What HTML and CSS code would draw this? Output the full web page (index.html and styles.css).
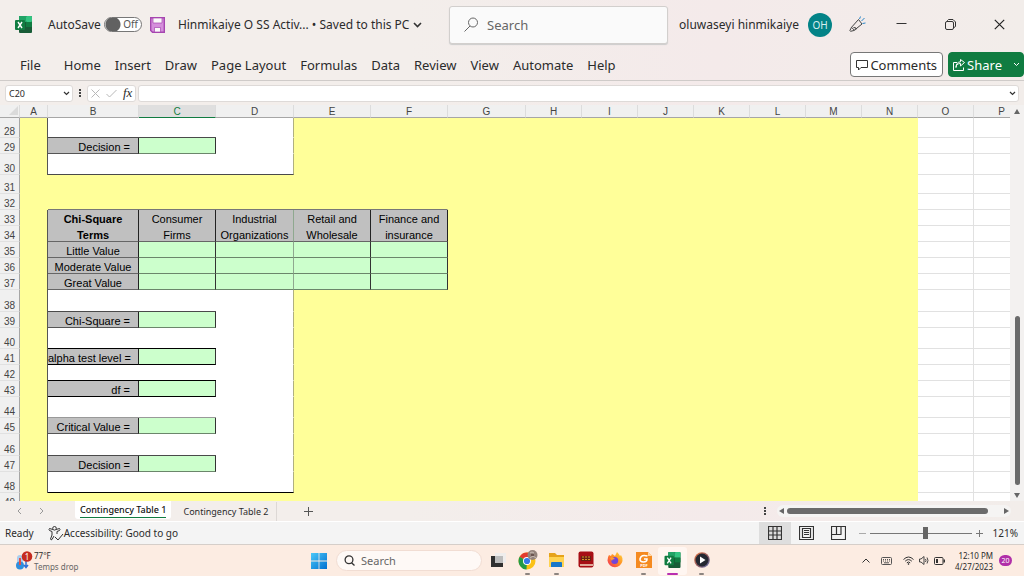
FILE: index.html
```html
<!DOCTYPE html>
<html lang="en">
<head>
  <meta charset="UTF-8">
  <meta name="viewport" content="width=device-width, initial-scale=1.0">
  <title>Hinmikaiye O SS Activ... - Excel</title>
  <link rel="stylesheet" href="styles.css">
</head>
<body>

  <header class="titlebar">
    <div class="title-left">
      <svg class="excel-logo" width="17" height="17" viewBox="0 0 17 17" aria-hidden="true">
        <rect x="4" y="0" width="13" height="17" rx="1" fill="#185c37"/>
        <rect x="4" y="0" width="7" height="6" fill="#21a366"/>
        <rect x="11" y="0" width="6" height="6" rx="1" fill="#33c481"/>
        <rect x="11" y="6" width="6" height="5" fill="#107c41"/>
        <rect x="0" y="4" width="10" height="10" rx="1" fill="#107c41"/>
        <path d="M3 6l4 6M7 6l-4 6" stroke="#fff" stroke-width="1.4"/>
      </svg>
      <label class="autosave">AutoSave
        <span class="switch"><input type="checkbox" role="switch" aria-label="AutoSave"><span class="switch-text">Off</span></span>
      </label>
      <button class="plain save" aria-label="Save">
        <svg width="15" height="16" viewBox="0 0 15 16"><path d="M.7.7h13.6v14.6H2.5L.7 13.5z" fill="#d58fdc" stroke="#a646b0" stroke-width="1.4"/><path d="M3 1h9v5H3zM4.500 10.500h6V15h-6z" fill="#fafafa" stroke="#a646b0" stroke-width=".7"/></svg>
      </button>
      <button class="plain doc-title">Hinmikaiye O SS Activ... • Saved to this PC
        <svg width="9" height="6" viewBox="0 0 9 6"><path d="M1 1l3.500 3.500L8 1" fill="none" stroke="#333" stroke-width="1.6"/></svg>
      </button>
    </div>
    <label class="title-search">
      <svg width="15" height="15" viewBox="0 0 15 15"><circle cx="9" cy="5.500" r="4.500" fill="none" stroke="#666"/><path d="M6 9L.5 14.500" stroke="#666"/></svg>
      <input type="search" placeholder="Search" aria-label="Search">
    </label>
    <div class="title-right">
      <span>oluwaseyi hinmikaiye</span>
      <button class="avatar">OH</button>
      <button class="plain pen" aria-label="Coming soon">
        <svg width="17" height="17" viewBox="0 0 17 17" fill="none"><path d="M9.500 3.500L13 8 5 14.500l-3.500.8-.6-.8 1.600-3.200zM4.500 11.500q3-.5 2.500 2M2.500 11.300l3 3" stroke="#444"/><path d="M10.500 3L11.500.5M12.500 5L15.500 2M13.500 7.500l3-.5" stroke="#2a86c8"/></svg>
      </button>
      <button class="plain win" aria-label="Minimize"><svg width="11" height="11" viewBox="0 0 11 11"><path d="M.5 4.500h10" stroke="#333"/></svg></button>
      <button class="plain win" aria-label="Restore"><svg width="11" height="11" viewBox="0 0 11 11" fill="none" stroke="#333"><rect x=".5" y="2.500" width="8" height="8" rx="1.500"/><path d="M2.500 2V1.500l1-1H8L10.500 3v4.500l-1.500 1"/></svg></button>
      <button class="plain win" aria-label="Close"><svg width="11" height="11" viewBox="0 0 11 11"><path d="M.8.8l9.400 9.400M10.200.8L.8 10.200" stroke="#222" stroke-width="1.200"/></svg></button>
    </div>
  </header>

  <nav class="ribbon">
    <button class="plain file-tab">File</button>
    <button class="plain">Home</button>
    <button class="plain">Insert</button>
    <button class="plain">Draw</button>
    <button class="plain">Page Layout</button>
    <button class="plain">Formulas</button>
    <button class="plain">Data</button>
    <button class="plain">Review</button>
    <button class="plain">View</button>
    <button class="plain">Automate</button>
    <button class="plain">Help</button>
    <div class="ribbon-actions">
      <button class="comments">
        <svg width="12" height="12" viewBox="0 0 12 12"><path d="M.5 1.500h11v7H5L2.500 11V8.500h-2z" fill="none" stroke="#333"/></svg>Comments
      </button>
      <button class="share">
        <svg width="12" height="12" viewBox="0 0 12 12" fill="none" stroke="#fff"><path d="M4 3.500H.5v8h10V8.500"/><path d="M3 8.500C3 6 4.500 4.500 7.500 4.500V7l4-3.500-4-3v2.300C4.500 3 3 5 3 8.500z"/></svg>Share
        <svg class="share-caret" width="7" height="5" viewBox="0 0 7 5"><path d="M1 1l2.500 2.500L6 1" fill="none" stroke="#fff"/></svg>
      </button>
    </div>
  </nav>

  <div class="formula-bar">
    <div class="name-box">
      <input type="text" value="C20" aria-label="Name box">
      <button class="plain" aria-label="Named ranges"><svg width="7" height="5" viewBox="0 0 7 5"><path d="M1 1l2.500 2.500L6 1" fill="none" stroke="#333" stroke-width="1.200"/></svg></button>
    </div>
    <svg class="dots" width="2" height="8" viewBox="0 0 2 8" fill="#444"><path d="M0 0h2v2H0zM0 3h2v2H0zM0 6h2v2H0z"/></svg>
    <div class="fx-box">
      <button class="plain" aria-label="Cancel"><svg width="9" height="9" viewBox="0 0 9 9"><path d="M.5.5l8 8M8.500.5l-8 8" stroke="#b8b8b8"/></svg></button>
      <button class="plain" aria-label="Enter"><svg width="11" height="9" viewBox="0 0 11 9"><path d="M.5 5l3 3L10.500 1" fill="none" stroke="#b8b8b8"/></svg></button>
      <button class="plain fx">fx</button>
    </div>
    <div class="formula-input">
      <input type="text" aria-label="Formula">
      <button class="plain" aria-label="Expand formula bar"><svg width="7" height="5" viewBox="0 0 7 5"><path d="M1 1l2.500 2.500L6 1" fill="none" stroke="#333" stroke-width="1.200"/></svg></button>
    </div>
  </div>

  <main class="sheet">
    <div class="grid-wrap">
      <table class="grid">
        <colgroup>
          <col class="c-head"><col class="c-a"><col class="c-b"><col class="c-m"><col class="c-w"><col class="c-m"><col class="c-m"><col class="c-w">
          <col class="c-n" span="9">
        </colgroup>
        <thead>
          <tr>
            <th class="corner"><svg width="9" height="9" viewBox="0 0 9 9"><path d="M9 0v9H0z" fill="#dadada"/></svg></th>
            <th>A</th><th>B</th><th class="selected">C</th><th>D</th><th>E</th><th>F</th><th>G</th><th>H</th><th>I</th><th>J</th><th>K</th><th>L</th><th>M</th><th>N</th><th>O</th><th>P</th>
          </tr>
        </thead>
        <tbody>
          <tr class="h20"><th>28</th><td class="y edge"></td><td class="w bb"></td><td class="w bb"></td><td class="w end"></td><td class="y" colspan="10"></td><td></td><td></td></tr>
          <tr><th>29</th><td class="y edge"></td><td class="label">Decision =</td><td class="g"></td><td class="w end"></td><td class="y" colspan="10"></td><td></td><td></td></tr>
          <tr class="h21"><th>30</th><td class="y edge"></td><td class="w bb"></td><td class="w bb"></td><td class="w end bb"></td><td class="y" colspan="10"></td><td></td><td></td></tr>
          <tr class="h19"><th>31</th><td class="y" colspan="14"></td><td></td><td></td></tr>
          <tr><th>32</th><td class="y"></td><td class="y top-line" colspan="5"></td><td class="y" colspan="8"></td><td></td><td></td></tr>
          <tr><th>33</th><td class="y edge"></td><td class="head bold">Chi-Square</td><td class="head">Consumer</td><td class="head soft">Industrial</td><td class="head">Retail and</td><td class="head">Finance and</td><td class="y" colspan="8"></td><td></td><td></td></tr>
          <tr><th>34</th><td class="y edge"></td><td class="head bold bb">Terms</td><td class="head bb">Firms</td><td class="head soft bb">Organizations</td><td class="head bb">Wholesale</td><td class="head bb">insurance</td><td class="y" colspan="8"></td><td></td><td></td></tr>
          <tr><th>35</th><td class="y edge"></td><td class="head bb">Little Value</td><td class="g"></td><td class="g soft"></td><td class="g"></td><td class="g"></td><td class="y" colspan="8"></td><td></td><td></td></tr>
          <tr><th>36</th><td class="y edge"></td><td class="head bb">Moderate Value</td><td class="g"></td><td class="g soft"></td><td class="g"></td><td class="g"></td><td class="y" colspan="8"></td><td></td><td></td></tr>
          <tr><th>37</th><td class="y edge"></td><td class="head bb">Great Value</td><td class="g"></td><td class="g soft"></td><td class="g"></td><td class="g"></td><td class="y" colspan="8"></td><td></td><td></td></tr>
          <tr class="h22"><th>38</th><td class="y edge"></td><td class="w bb"></td><td class="w bb"></td><td class="w end"></td><td class="y" colspan="10"></td><td></td><td></td></tr>
          <tr><th>39</th><td class="y edge"></td><td class="label">Chi-Square =</td><td class="g"></td><td class="w end"></td><td class="y" colspan="10"></td><td></td><td></td></tr>
          <tr class="h21"><th>40</th><td class="y edge"></td><td class="w bb dark"></td><td class="w bb dark"></td><td class="w end"></td><td class="y" colspan="10"></td><td></td><td></td></tr>
          <tr><th>41</th><td class="y edge"></td><td class="label dark">alpha test level =</td><td class="g dark"></td><td class="w end"></td><td class="y" colspan="10"></td><td></td><td></td></tr>
          <tr><th>42</th><td class="y edge"></td><td class="w bb dark"></td><td class="w bb dark"></td><td class="w end"></td><td class="y" colspan="10"></td><td></td><td></td></tr>
          <tr><th>43</th><td class="y edge"></td><td class="label dark">df =</td><td class="g dark"></td><td class="w end"></td><td class="y" colspan="10"></td><td></td><td></td></tr>
          <tr class="h21"><th>44</th><td class="y edge"></td><td class="w bb light"></td><td class="w bb light"></td><td class="w end"></td><td class="y" colspan="10"></td><td></td><td></td></tr>
          <tr><th>45</th><td class="y edge"></td><td class="label">Critical Value =</td><td class="g"></td><td class="w end"></td><td class="y" colspan="10"></td><td></td><td></td></tr>
          <tr class="h22"><th>46</th><td class="y edge"></td><td class="w bb"></td><td class="w bb"></td><td class="w end"></td><td class="y" colspan="10"></td><td></td><td></td></tr>
          <tr><th>47</th><td class="y edge"></td><td class="label">Decision =</td><td class="g"></td><td class="w end"></td><td class="y" colspan="10"></td><td></td><td></td></tr>
          <tr class="h21"><th>48</th><td class="y edge"></td><td class="w bb dark"></td><td class="w bb dark"></td><td class="w end bb dark"></td><td class="y" colspan="10"></td><td></td><td></td></tr>
          <tr><th>49</th><td class="y" colspan="14"></td><td></td><td></td></tr>
        </tbody>
      </table>
    </div>
    <div class="vscroll">
      <button class="plain" aria-label="Scroll up"><svg width="6" height="5" viewBox="0 0 6 5"><path d="M3 0l3 5H0z" fill="#666"/></svg></button>
      <div class="vtrack"><div class="vthumb"></div></div>
      <button class="plain" aria-label="Scroll down"><svg width="6" height="5" viewBox="0 0 6 5"><path d="M3 5l3-5H0z" fill="#666"/></svg></button>
    </div>
  </main>

  <div class="sheet-tabs">
    <button class="plain nav-arrow" aria-label="Previous sheet"><svg width="5" height="8" viewBox="0 0 5 8"><path d="M4 1L1 4l3 3" fill="none" stroke="#999"/></svg></button>
    <button class="plain nav-arrow" aria-label="Next sheet"><svg width="5" height="8" viewBox="0 0 5 8"><path d="M1 1l3 3-3 3" fill="none" stroke="#999"/></svg></button>
    <button class="plain tab active"><span>Contingency Table 1</span></button>
    <button class="plain tab">Contingency Table 2</button>
    <button class="plain add" aria-label="New sheet"><svg width="9" height="9" viewBox="0 0 9 9"><path d="M4.500 0v9M0 4.500h9" stroke="#555"/></svg></button>
    <div class="hscroll">
      <svg width="2" height="8" viewBox="0 0 2 8" fill="#444"><path d="M0 0h2v2H0zM0 3h2v2H0zM0 6h2v2H0z"/></svg>
      <div class="htrack">
        <button class="plain" aria-label="Scroll left"><svg width="5" height="6" viewBox="0 0 5 6"><path d="M0 3l5-3v6z" fill="#666"/></svg></button>
        <div class="hthumb"></div>
        <button class="plain" aria-label="Scroll right"><svg width="5" height="6" viewBox="0 0 5 6"><path d="M5 3L0 0v6z" fill="#666"/></svg></button>
      </div>
    </div>
  </div>

  <div class="statusbar">
    <span>Ready</span>
    <button class="plain access">
      <svg width="16" height="15" viewBox="0 0 16 15" fill="none" stroke="#333"><circle cx="6.500" cy="2.300" r="1.800"/><path d="M5 3.500L1.500 2.500Q.5 3.500 1.500 4.500L4 5.500V9l-1.500 4q.5 1.500 1.500.5L6 10M8 3.500l3.500-1q1 1 0 2L9 5.500V8M7 11l3 3 5-6"/></svg>Accessibility: Good to go
    </button>
    <div class="views">
      <button class="plain view current" aria-label="Normal view"><svg width="14" height="14" viewBox="0 0 14 14"><path d="M.5.5h13v13H.5zM.5 5h13M.5 9h13M5 .5v13M9 .5v13" fill="none" stroke="#333" stroke-width="1.200"/></svg></button>
      <button class="plain view" aria-label="Page layout view"><svg width="15" height="14" viewBox="0 0 15 14"><path d="M.5.5h14v13H.5zM3.500 2.500h8v9h-8zM5 4.500h5M5 6.500h5M5 8.500h5" fill="none" stroke="#333" stroke-width="1.200"/></svg></button>
      <button class="plain view" aria-label="Page break view"><svg width="15" height="14" viewBox="0 0 15 14"><path d="M.5.5h14v13H.5zM5.500.5V8M10 .5v7.500M.5 8.500h10" fill="none" stroke="#333" stroke-width="1.200"/></svg></button>
    </div>
    <div class="zoom">
      <button class="plain" aria-label="Zoom out"><svg width="7" height="7" viewBox="0 0 7 7"><path d="M0 3.500h7" stroke="#aaa"/></svg></button>
      <input type="range" min="10" max="210" value="121" aria-label="Zoom">
      <button class="plain" aria-label="Zoom in"><svg width="7" height="7" viewBox="0 0 7 7"><path d="M0 3.500h7M3.500 0v7" stroke="#777"/></svg></button>
      <span class="percent">121%</span>
    </div>
  </div>

  <footer class="taskbar">
    <button class="plain weather">
      <svg width="18" height="20" viewBox="0 0 18 20">
        <rect x="2" y="4" width="6" height="11" rx="3" fill="#a9cdee"/><circle cx="5" cy="14.500" r="4" fill="#2f8fdd"/><path d="M5 7v7" stroke="#e2504a" stroke-width="2"/>
        <path d="M11 9v7M9 14l2 2.500 2-2.500" fill="none" stroke="#2d6fd8" stroke-width="1.500"/>
        <circle cx="12" cy="5.500" r="5.300" fill="#c52b20"/><text x="12" y="8.500" text-anchor="middle" class="badge-text">1</text>
      </svg>
      <span class="two-line"><span>77°F</span><span class="muted">Temps drop</span></span>
    </button>
    <div class="apps">
      <button class="plain start" aria-label="Start"><svg width="16" height="16" viewBox="0 0 16 16"><defs><linearGradient id="win" x2="1" y2="1"><stop stop-color="#4cc8f8"/><stop offset="1" stop-color="#0070d0"/></linearGradient></defs><path d="M0 0h7.600v7.600H0zM8.400 0H16v7.600H8.400zM0 8.400h7.600V16H0zM8.400 8.400H16V16H8.400z" fill="url(#win)"/></svg></button>
      <label class="task-search">
        <svg width="11" height="11" viewBox="0 0 11 11" fill="none" stroke="#333" stroke-width="1.300"><circle cx="5" cy="4.800" r="3.900"/><path d="M7.500 7.700l3 2.800"/></svg>
        <input type="search" placeholder="Search" aria-label="Search the taskbar">
      </label>
      <button class="plain app" aria-label="Task view"><svg width="17" height="16" viewBox="0 0 17 16"><path d="M1 4h12v11H1z" fill="#2f2f2f"/><path d="M5 1h11v10H5z" fill="#ededed" opacity=".9"/><path d="M5 4h8v7H5z" fill="#bcbcbc"/></svg></button>
      <button class="plain app open" aria-label="Chrome">
        <svg width="20" height="20" viewBox="0 0 20 20"><circle cx="9" cy="11" r="8.500" fill="#fbc116"/><path d="M9 11L1.600 6.800A8.500 8.500 0 0 1 16.400 6.800z" fill="#e33b2e"/><path d="M9 11L1.600 6.800A8.500 8.500 0 0 0 8.500 19.500z" fill="#229a48"/><circle cx="9" cy="11" r="4" fill="#fff"/><circle cx="9" cy="11" r="3.100" fill="#3679e8"/><circle cx="14.500" cy="5" r="5" fill="#94847b"/><path d="M12 3q2-2 4 0M12 8l3-2 3 2" fill="none" stroke="#c9bdb5"/><path d="M13 5h3" stroke="#5d4640" stroke-width="1.500"/></svg>
      </button>
      <button class="plain app open" aria-label="File Explorer"><svg width="17" height="16" viewBox="0 0 17 16"><path d="M1 1h6l2 2h7v11H1z" fill="#e6a31b"/><path d="M1 5h15v10H1z" fill="#ffd351"/><path d="M3 11q0-1 1-1h9q1 0 1 1v4H3z" fill="#1876c9"/></svg></button>
      <button class="plain app" aria-label="Dictionary"><svg width="16" height="17" viewBox="0 0 16 17"><rect x=".5" y=".5" width="15" height="16" rx="2" fill="#a70e14"/><path d="M3 5h10v5H3z" fill="#6a2011"/><path d="M4 6h2M7 6h2M10 6h2M4 8.500h2M7 8.500h2M10 8.500h2" stroke="#d99328"/><path d="M2 14h13" stroke="#f2dbc3" stroke-width="1.500"/></svg></button>
      <button class="plain app" aria-label="Firefox"><svg width="16" height="16" viewBox="0 0 16 16"><defs><linearGradient id="fox" x1="1" x2="0" y2="1"><stop stop-color="#ffdc3c"/><stop offset=".5" stop-color="#ff8a24"/><stop offset="1" stop-color="#f3265f"/></linearGradient></defs><path d="M2 3l2 1 1-2q2 1 3 2Q9 2 10 0q2 2 3 4l1-1q2 3 1.500 6A7.600 7.600 0 0 1 .5 8.500Q.5 5 2 3z" fill="url(#fox)"/><circle cx="7.700" cy="8.500" r="3.500" fill="#7345d8"/><path d="M3 6q3-2 5 1-3 0-3 2z" fill="#ff9a30"/></svg></button>
      <button class="plain app open" aria-label="PDF editor"><svg width="16" height="16" viewBox="0 0 16 16"><path d="M0 0h12l4 4v12H0z" fill="#f58a20"/><path d="M12 0v4h4z" fill="#ffd9a8"/><path d="M11.500 4Q5 2 4 7q0 3 3.500 3Q11 10 11 7H8" fill="none" stroke="#fff" stroke-width="1.600"/><text x="8" y="15" text-anchor="middle" class="pdf-text">PDF</text></svg></button>
      <button class="plain app running" aria-label="Excel"><svg width="17" height="16" viewBox="0 0 17 17"><rect x="4" width="13" height="17" rx="1" fill="#185c37"/><path d="M4 0h7v6H4z" fill="#21a366"/><rect x="11" width="6" height="6" rx="1" fill="#33c481"/><path d="M11 6h6v5h-6z" fill="#107c41"/><rect y="4" width="10" height="10" rx="1" fill="#107c41"/><path d="M3 6l4 6M7 6l-4 6" stroke="#fff" stroke-width="1.400"/></svg></button>
      <button class="plain app open" aria-label="Media Player"><svg width="16" height="16" viewBox="0 0 16 16"><defs><linearGradient id="play" x2="1" y2="1"><stop stop-color="#e5743e"/><stop offset=".6" stop-color="#8a5a68"/><stop offset="1" stop-color="#5474b5"/></linearGradient></defs><circle cx="8" cy="8" r="7.800" fill="url(#play)"/><circle cx="8" cy="8" r="6.500" fill="#242832"/><path d="M6 4.500L11.500 8 6 11.500z" fill="#fff"/></svg></button>
    </div>
    <div class="tray">
      <button class="plain" aria-label="Hidden icons"><svg width="8" height="5" viewBox="0 0 8 5"><path d="M.5 4.500L4 1l3.500 3.500" fill="none" stroke="#333"/></svg></button>
      <button class="plain keyboard" aria-label="Touch keyboard"><svg width="11" height="8" viewBox="0 0 11 8"><rect x=".5" y=".5" width="10" height="7" rx="1" fill="none" stroke="#555"/><path d="M2 2.500h7M2 4h7" stroke="#555" stroke-dasharray="1 1"/><path d="M3 5.800h5" stroke="#555"/></svg></button>
      <button class="plain system" aria-label="Network, volume and battery">
        <svg width="11" height="9" viewBox="0 0 11 9" fill="none" stroke="#333"><path d="M.5 3.500q5-5 10 0M2.200 5.200q3.300-3.200 6.600 0M3.800 6.800q1.700-1.600 3.400 0"/><circle cx="5.500" cy="8" r=".5"/></svg>
        <svg width="10" height="9" viewBox="0 0 10 9" fill="none" stroke="#444"><path d="M.5 3h1.500l3-2.500v8L2 6H.5zM6.500 3q1 1.500 0 3M8 1.500q2 3 0 6"/></svg>
        <svg width="11" height="8" viewBox="0 0 11 8"><rect x=".5" y=".5" width="8.500" height="7" rx="1" fill="none" stroke="#333"/><path d="M2 2h2v4H2zM9.500 2.500H11v3H9.500z" fill="#333"/></svg>
      </button>
      <button class="plain clock"><span>12:10 PM</span><span>4/27/2023</span></button>
      <button class="notif" aria-label="20 notifications">20</button>
    </div>
  </footer>

</body>
</html>
```

FILE: styles.css
```css
* {
  box-sizing: border-box;
}

body {
  margin: 0;
  height: 100vh;
  display: flex;
  flex-direction: column;
  overflow: hidden;
  font-family: "Noto Sans", "Open Sans", sans-serif;
  font-size: 12px;
  color: #2b2b2b;
  background: linear-gradient(90deg, #f3eeeb 0%, #f3eeeb 40%, #f4eaea 70%, #f2edea 100%);
}

svg {
  display: block;
  flex: none;
}

button,
input {
  font: inherit;
  color: inherit;
}

input {
  min-width: 0;
  border: none;
  outline: none;
  background: transparent;
  padding: 0;
}

.plain {
  display: flex;
  align-items: center;
  justify-content: center;
  border: none;
  background: none;
  padding: 0;
  white-space: nowrap;
}

/* title bar */
.titlebar {
  display: flex;
  align-items: center;
  height: 49px;
  flex: none;
}

.title-left {
  flex: 1;
  display: flex;
  align-items: center;
  padding-left: 15px;
}

.autosave {
  display: flex;
  align-items: center;
  gap: 3px;
  margin-left: 16px;
}

.switch {
  position: relative;
  display: block;
  width: 38px;
  height: 15px;
}

.switch input {
  appearance: none;
  display: block;
  width: 100%;
  height: 100%;
  margin: 0;
  border: 1px solid #777;
  border-radius: 8px;
  background: radial-gradient(circle at 8px 50%, #616161 7px, #fff 8px);
}

.switch-text {
  position: absolute;
  right: 4px;
  top: 0;
  font-size: 10px;
  line-height: 15px;
  color: #555;
}

.save {
  margin-left: 8px;
}

.doc-title {
  margin-left: 13px;
  gap: 4px;
}

.title-search {
  display: flex;
  align-items: center;
  gap: 8px;
  width: 219px;
  height: 38px;
  padding: 0 14px;
  margin-right: 11px;
  border: 1px solid #d2cfcd;
  border-radius: 3px;
  background: #fafafa;
  box-shadow: 0 1px 1px #ccc;
}

.title-search input {
  flex: 1;
  font-size: 13px;
}

input::placeholder {
  color: #666;
  opacity: 1;
}

.title-right {
  display: flex;
  align-items: center;
}

.avatar {
  width: 24px;
  height: 24px;
  margin: 0 6px 0 9px;
  padding: 0;
  border: none;
  border-radius: 50%;
  background: #038387;
  color: #d8efef;
  font-size: 10px;
}

.pen {
  width: 39px;
}

.win {
  width: 49px;
  height: 40px;
}

/* ribbon tabs */
.ribbon {
  display: flex;
  align-items: center;
  gap: 14px;
  height: 32px;
  flex: none;
  padding-left: 20px;
  border-bottom: 1px solid #cfcbc9;
  font-size: 13px;
}

.file-tab {
  margin-right: 9px;
}

.ribbon-actions {
  display: flex;
  gap: 5px;
  margin-left: auto;
}

.comments,
.share {
  display: flex;
  align-items: center;
  gap: 2px;
  height: 25px;
  padding: 0 5px;
  border: 1px solid #777;
  border-radius: 4px;
  background: #fff;
}

.share {
  border-color: #107c41;
  background: #107c41;
  color: #fff;
  padding: 0 3px 0 4px;
}

.share-caret {
  margin-left: 9px;
}

/* formula bar */
.formula-bar {
  display: flex;
  align-items: center;
  height: 24px;
  flex: none;
  padding: 0 5px;
}

.name-box,
.fx-box,
.formula-input {
  display: flex;
  align-items: center;
  height: 17px;
  border: 1px solid #dedad8;
  border-radius: 3px;
  background: #fff;
}

.name-box {
  width: 68px;
  padding: 0 2px 0 3px;
  font-size: 9px;
}

.name-box input,
.formula-input input {
  flex: 1;
}

.dots {
  margin: 0 6px;
}

.fx-box {
  gap: 6px;
  padding: 0 3px;
}

.fx {
  font-family: "Liberation Serif", serif;
  font-style: italic;
  font-size: 13px;
}

.formula-input {
  flex: 1;
  margin-left: 2px;
  padding-right: 2px;
}

/* worksheet */
.sheet {
  display: flex;
  flex: 1;
  min-height: 0;
}

.grid-wrap {
  flex: 1;
  overflow: hidden;
  background: #fff;
}

.grid {
  table-layout: fixed;
  width: 1030px;
  border-spacing: 0;
  font-family: "Liberation Sans", Arial, sans-serif;
  font-size: 11px;
  line-height: 12px;
  color: #000;
}

.c-head { width: 20px; }
.c-a { width: 28px; }
.c-b { width: 91px; }
.c-m { width: 77px; }
.c-w { width: 78px; }
.c-n { width: 56px; }

.grid th,
.grid td {
  height: 16px;
  padding: 0;
  border: 0 solid #e1e1e1;
  border-width: 0 1px 1px 0;
  vertical-align: bottom;
  white-space: nowrap;
}

.grid th {
  background: #f0f0f0;
  color: #444;
  font-size: 10px;
  font-weight: normal;
  line-height: 10px;
}

.grid thead th {
  height: 13px;
  border-right-color: #dcdcdc;
  border-bottom-color: #a6a6a6;
}

.grid thead .corner svg {
  margin: 0 1px 2px auto;
}

.grid thead .selected {
  background: #dfdfdf;
  border-bottom-color: #107c41;
  color: #107c41;
}

.grid tbody th {
  border-right-color: #a6a6a6;
}

.grid .h19 > * { height: 19px; }
.grid .h20 > * { height: 20px; }
.grid .h21 > * { height: 21px; }
.grid .h22 > * { height: 22px; }

.grid .y {
  background: #ffff99;
  border-color: #ffff99;
}

.grid .edge {
  border-right-color: #555;
  border-bottom-width: 0;
}

.grid .w {
  border-color: #fff;
  border-right-width: 0;
}

.grid .end {
  border-right-width: 1px;
  border-right-color: #b0b080;
}

.grid .bb {
  border-bottom-color: #4a4a4a;
}

.grid .top-line {
  border-bottom-color: #777;
}

.grid .label,
.grid .head {
  background: #c0c0c0;
  border-right-color: #222;
}

.grid .label {
  border-bottom-color: #555;
  padding-right: 8px;
  text-align: right;
}

.grid .head {
  border-bottom-width: 0;
  padding-bottom: 1px;
  text-align: center;
}

.grid .head.bb {
  border-bottom-width: 1px;
  border-bottom-color: #666;
  padding-bottom: 0;
}

.grid .bold {
  font-weight: bold;
}

.grid .g {
  background: #ccffcc;
  border-right-color: #333;
  border-bottom-color: #6b866b;
}

.grid .soft {
  border-right-color: #8fa88f;
}

.grid .dark {
  border-bottom-color: #000;
}

.grid .light {
  border-bottom-color: #999;
}

.vscroll {
  display: flex;
  flex-direction: column;
  width: 14px;
  background: #f3f1f0;
}

.vscroll button {
  height: 12px;
}

.vtrack {
  flex: 1;
  display: flex;
  flex-direction: column;
  align-items: center;
  justify-content: flex-end;
  padding-bottom: 4px;
}

.vthumb {
  width: 5px;
  height: 46%;
  border-radius: 3px;
  background: #6b6b6b;
}

/* sheet tabs */
.sheet-tabs {
  display: flex;
  align-items: center;
  height: 21px;
  flex: none;
  padding-left: 8px;
  font-size: 9px;
  border-bottom: 1px solid #fff;
}

.nav-arrow {
  width: 22px;
}

.tab {
  height: 19px;
  padding: 0 8px;
  border-right: 1px solid #ddd8d5;
}

.tab.active {
  align-self: flex-start;
  height: 18px;
  margin-left: 23px;
  padding: 0 5px;
  margin-right: 4px;
  border: none;
  border-radius: 0 0 3px 3px;
  background: #fff;
  font-weight: 500;
  color: #111;
}

.tab.active span {
  line-height: 15px;
  border-bottom: 1px solid #107c41;
}

.add {
  margin-left: 27px;
}

.hscroll {
  display: flex;
  align-items: center;
  gap: 11px;
  width: 260px;
  margin-left: auto;
}

.htrack {
  flex: 1;
  display: flex;
  align-items: center;
  height: 12px;
  padding: 0 2px;
  margin-right: 13px;
  border-radius: 6px;
  background: #f5f4f3;
}

.hthumb {
  flex: 1;
  height: 6px;
  margin: 0 16px 0 3px;
  border-radius: 3px;
  background: #6b6b6b;
}

/* status bar */
.statusbar {
  display: flex;
  align-items: center;
  height: 23px;
  flex: none;
  padding-left: 5px;
  background: #f4f4f4;
  border-bottom: 1px solid #d5cec9;
  font-size: 10px;
}

.access {
  margin-left: 14px;
}

.views {
  display: flex;
  align-self: stretch;
  margin-left: auto;
}

.view {
  width: 32px;
}

.current {
  background: #dedede;
}

.zoom {
  display: flex;
  align-items: center;
  margin: 0 6px 0 4px;
}

.zoom input {
  appearance: none;
  width: 102px;
  height: 12px;
  margin: 0 4px;
  background: linear-gradient(#777, #777) center / 100% 1px no-repeat;
}

.zoom input::-webkit-slider-thumb {
  appearance: none;
  width: 5px;
  height: 12px;
  background: #666;
}

.percent {
  margin-left: 10px;
}

/* taskbar */
.taskbar {
  display: grid;
  grid-template-columns: 1fr auto 1fr;
  align-items: center;
  height: 31px;
  flex: none;
  padding: 0 12px 0 15px;
  background: #fcece2;
}

.weather {
  justify-self: start;
  gap: 1px;
}

.two-line,
.clock {
  display: flex;
  flex-direction: column;
  align-items: flex-start;
  font-size: 8px;
  line-height: 11px;
}

.muted {
  color: #666;
}

.badge-text {
  font-size: 8px;
  fill: #fff;
}

.pdf-text {
  font-size: 4px;
  font-weight: bold;
  fill: #fff;
}

.apps {
  display: flex;
  align-items: center;
}

.start {
  margin-right: 9px;
}

.task-search {
  display: flex;
  align-items: center;
  gap: 6px;
  width: 146px;
  height: 21px;
  padding: 0 7px;
  margin-right: 2px;
  border: 1px solid #f1ddd3;
  border-radius: 11px;
  background: #fef9f6;
  font-size: 11px;
}

.task-search input {
  flex: 1;
}

.app {
  flex-direction: column;
  width: 29px;
  height: 28px;
}

.app svg {
  margin: auto;
}

.app::after {
  content: "";
  width: 5px;
  height: 2px;
  border-radius: 1px;
}

.open::after {
  background: #8d8580;
}

.running {
  border-radius: 3px;
  background: #fff6f1;
}

.running::after {
  width: 11px;
  background: #b92fb0;
}

.tray {
  justify-self: end;
  display: flex;
  align-items: center;
}

.keyboard {
  margin: 0 11px;
}

.system {
  gap: 5px;
}

.clock {
  align-items: flex-end;
  margin: 0 6px 0 10px;
}

.notif {
  width: 13px;
  height: 11px;
  padding: 0;
  border: none;
  border-radius: 6px;
  background: #b12fa8;
  color: #fff;
  font-size: 7px;
  line-height: 11px;
}
```
